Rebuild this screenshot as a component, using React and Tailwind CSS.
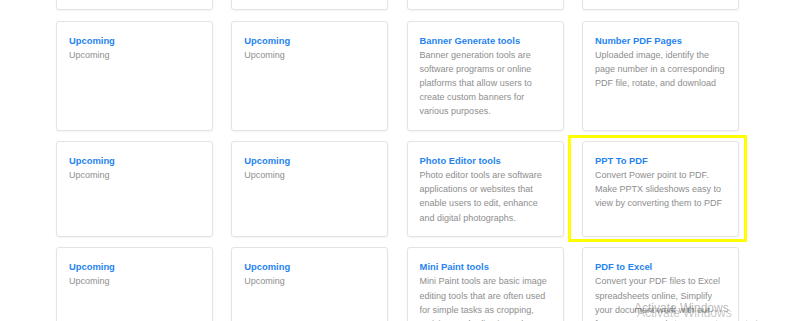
import React from 'react';

const rows = [
  [
    { title: 'Upcoming', desc: 'Upcoming' },
    { title: 'Upcoming', desc: 'Upcoming' },
    { title: 'Upcoming', desc: 'Upcoming' },
    { title: 'Upcoming', desc: 'Upcoming' },
  ],
  [
    { title: 'Upcoming', desc: 'Upcoming' },
    { title: 'Upcoming', desc: 'Upcoming' },
    {
      title: 'Banner Generate tools',
      desc: 'Banner generation tools are software programs or online platforms that allow users to create custom banners for various purposes.',
    },
    {
      title: 'Number PDF Pages',
      desc: 'Uploaded image, identify the page number in a corresponding PDF file, rotate, and download',
    },
  ],
  [
    { title: 'Upcoming', desc: 'Upcoming' },
    { title: 'Upcoming', desc: 'Upcoming' },
    {
      title: 'Photo Editor tools',
      desc: 'Photo editor tools are software applications or websites that enable users to edit, enhance and digital photographs.',
    },
    {
      title: 'PPT To PDF',
      desc: 'Convert Power point to PDF. Make PPTX slideshows easy to view by converting them to PDF',
      highlight: true,
    },
  ],
  [
    { title: 'Upcoming', desc: 'Upcoming' },
    { title: 'Upcoming', desc: 'Upcoming' },
    {
      title: 'Mini Paint tools',
      desc: 'Mini Paint tools are basic image editing tools that are often used for simple tasks as cropping, resizing, and adjusting colors.',
    },
    {
      title: 'PDF to Excel',
      desc: 'Convert your PDF files to Excel spreadsheets online, Simplify your document work with our free converter tool.',
    },
  ],
];

const ToolCard = ({ title, desc, highlight, filler }) => (
  <div className="relative">
    <div
      className={`h-full bg-white border border-[#e4e4e4] rounded-[3px] shadow-[0_1px_2px_rgba(0,0,0,0.05)] px-[12px] pt-[12px] pb-[11px] ${
        filler ? 'min-h-[100px]' : ''
      }`}
    >
      <div className="text-[9.4px] leading-[14px] font-bold text-[#1f84f0]">{title}</div>
      <p className="text-[9px] leading-[14.2px] text-[#8e8e8e]">{desc}</p>
    </div>
    {/* yellow annotation box */}
    {highlight && (
      <div className="absolute -left-[14px] -top-[6px] -right-[8px] -bottom-[5px] border-[3px] border-[#ffff00] pointer-events-none" />
    )}
  </div>
);

export default function App() {
  return (
    <div
      className="relative w-[791px] h-[321px] overflow-hidden bg-white"
      style={{ fontFamily: '"Liberation Sans", Arial, sans-serif' }}
    >
      <div className="pl-[56px] -mt-[90px] grid grid-cols-[repeat(4,157px)] gap-x-[18.3px] gap-y-[10.5px]">
        {rows.map((row, r) =>
          row.map((card, c) => <ToolCard key={`${r}-${c}`} {...card} filler={r === 0} />)
        )}
      </div>

      {/* Windows activation watermark */}
      <div className="absolute left-[634px] top-[301px] text-[12px] leading-[14px] text-[rgba(90,90,90,0.45)] whitespace-nowrap">
        Activate Windows
      </div>
      <div className="absolute left-[637px] top-[306px] text-[12px] leading-[14px] text-[rgba(90,90,90,0.35)] whitespace-nowrap">
        Activate Windows
      </div>
      <div className="absolute left-[634px] top-[318px] text-[9px] leading-[12px] text-[rgba(90,90,90,0.4)] whitespace-nowrap">
        Go to Settings to activate Windows.
      </div>
    </div>
  );
}
